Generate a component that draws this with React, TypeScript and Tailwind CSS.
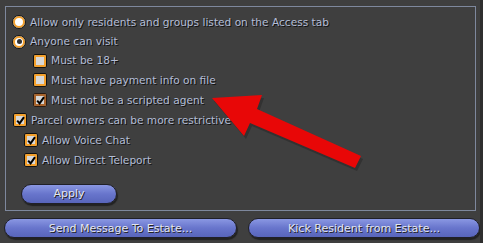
import type { ReactNode } from 'react';

// ─── Bits ─────────────────────────────────────

const label = 'text-[10.6px] leading-none text-[#b3bdd6] [text-shadow:1px_1px_0_#111]';

function Radio({ on }: { on?: boolean }) {
  return (
    <span className="flex h-[14px] w-[14px] shrink-0 items-center justify-center rounded-full border border-[#111] bg-white shadow-[inset_0_0_0_2px_#f3a02c]">
      {on && <span className="h-[5px] w-[5px] rounded-full bg-[#333]" />}
    </span>
  );
}

function Check({ on, dim }: { on?: boolean; dim?: boolean }) {
  return (
    <span
      className={
        dim
          ? 'flex h-[14px] w-[14px] shrink-0 items-center justify-center rounded-[2px] border border-[#2a1a10] bg-[#d6d6d6] shadow-[inset_0_0_0_2px_#a9652d]'
          : 'flex h-[14px] w-[14px] shrink-0 items-center justify-center rounded-[2px] border border-[#111] bg-[#d8d8d8] shadow-[inset_0_0_0_2px_#f3a02c]'
      }
    >
      {on && (
        <svg width="9" height="9" viewBox="0 0 9 9">
          <path d="M1.2 4.6 L3.6 7.4 L8 1.2" fill="none" stroke="#000" strokeWidth="2" />
        </svg>
      )}
    </span>
  );
}

function Row({ h, indent, children, text }: { h: string; indent: string; children: ReactNode; text: string }) {
  return (
    <div className={`flex items-center gap-[4px] ${h} ${indent}`}>
      {children}
      <span className={label}>{text}</span>
    </div>
  );
}

function Btn({ w, text }: { w: string; text: string }) {
  return (
    <button
      className={`${w} h-[20px] rounded-full border border-[#202028] bg-gradient-to-b from-[#8a97e2] via-[#6875cc] to-[#5865bb] text-[11px] leading-none text-[#e2e4f0] shadow-[1px_2px_1px_#222] [text-shadow:1px_1px_0_#222]`}
    >
      {text}
    </button>
  );
}

// ─── Component ─────────────────────────────────

export default function App() {
  return (
    <div
      className="relative h-[243px] w-[483px] overflow-hidden border-r-[3px] border-[#2e2e2e] bg-[#3f3f3f]"
      style={{ fontFamily: '"DejaVu Sans", sans-serif' }}
    >
      <div className="ml-[5px] mt-[6px] h-[205px] w-[471px] border border-[#7e889d] pt-[5px]">
        <Row h="h-[20px]" indent="pl-[6px]" text="Allow only residents and groups listed on the Access tab">
          <Radio />
        </Row>
        <Row h="h-[19px]" indent="pl-[6px]" text="Anyone can visit">
          <Radio on />
        </Row>
        <Row h="h-[19px]" indent="pl-[27px]" text="Must be 18+">
          <Check />
        </Row>
        <Row h="h-[20px]" indent="pl-[27px]" text="Must have payment info on file">
          <Check />
        </Row>
        <Row h="h-[20px]" indent="pl-[27px]" text="Must not be a scripted agent">
          <Check on dim />
        </Row>
        <Row h="h-[20px]" indent="pl-[7px]" text="Parcel owners can be more restrictive">
          <Check on />
        </Row>
        <Row h="h-[20px]" indent="pl-[18px]" text="Allow Voice Chat">
          <Check on />
        </Row>
        <Row h="h-[20px]" indent="pl-[18px]" text="Allow Direct Teleport">
          <Check on />
        </Row>
        <div className="mt-[10px] pl-[15px]">
          <Btn w="w-[96px]" text="Apply" />
        </div>
      </div>

      <div className="mt-[7px] flex gap-[11px] pl-[4px]">
        <Btn w="w-[233px]" text="Send Message To Estate..." />
        <Btn w="w-[232px]" text="Kick Resident from Estate..." />
      </div>

      {/* Annotation arrow */}
      <svg className="pointer-events-none absolute left-0 top-0" width="483" height="243" viewBox="0 0 483 243">
        <polygon
          points="212,98 262,95 257,109 361,156 355,168 250,123 244,136"
          fill="#1a1a1a"
          opacity="0.35"
          transform="translate(2,3)"
        />
        <polygon points="212,98 262,95 257,109 361,156 355,168 250,123 244,136" fill="#e80707" />
      </svg>
    </div>
  );
}
